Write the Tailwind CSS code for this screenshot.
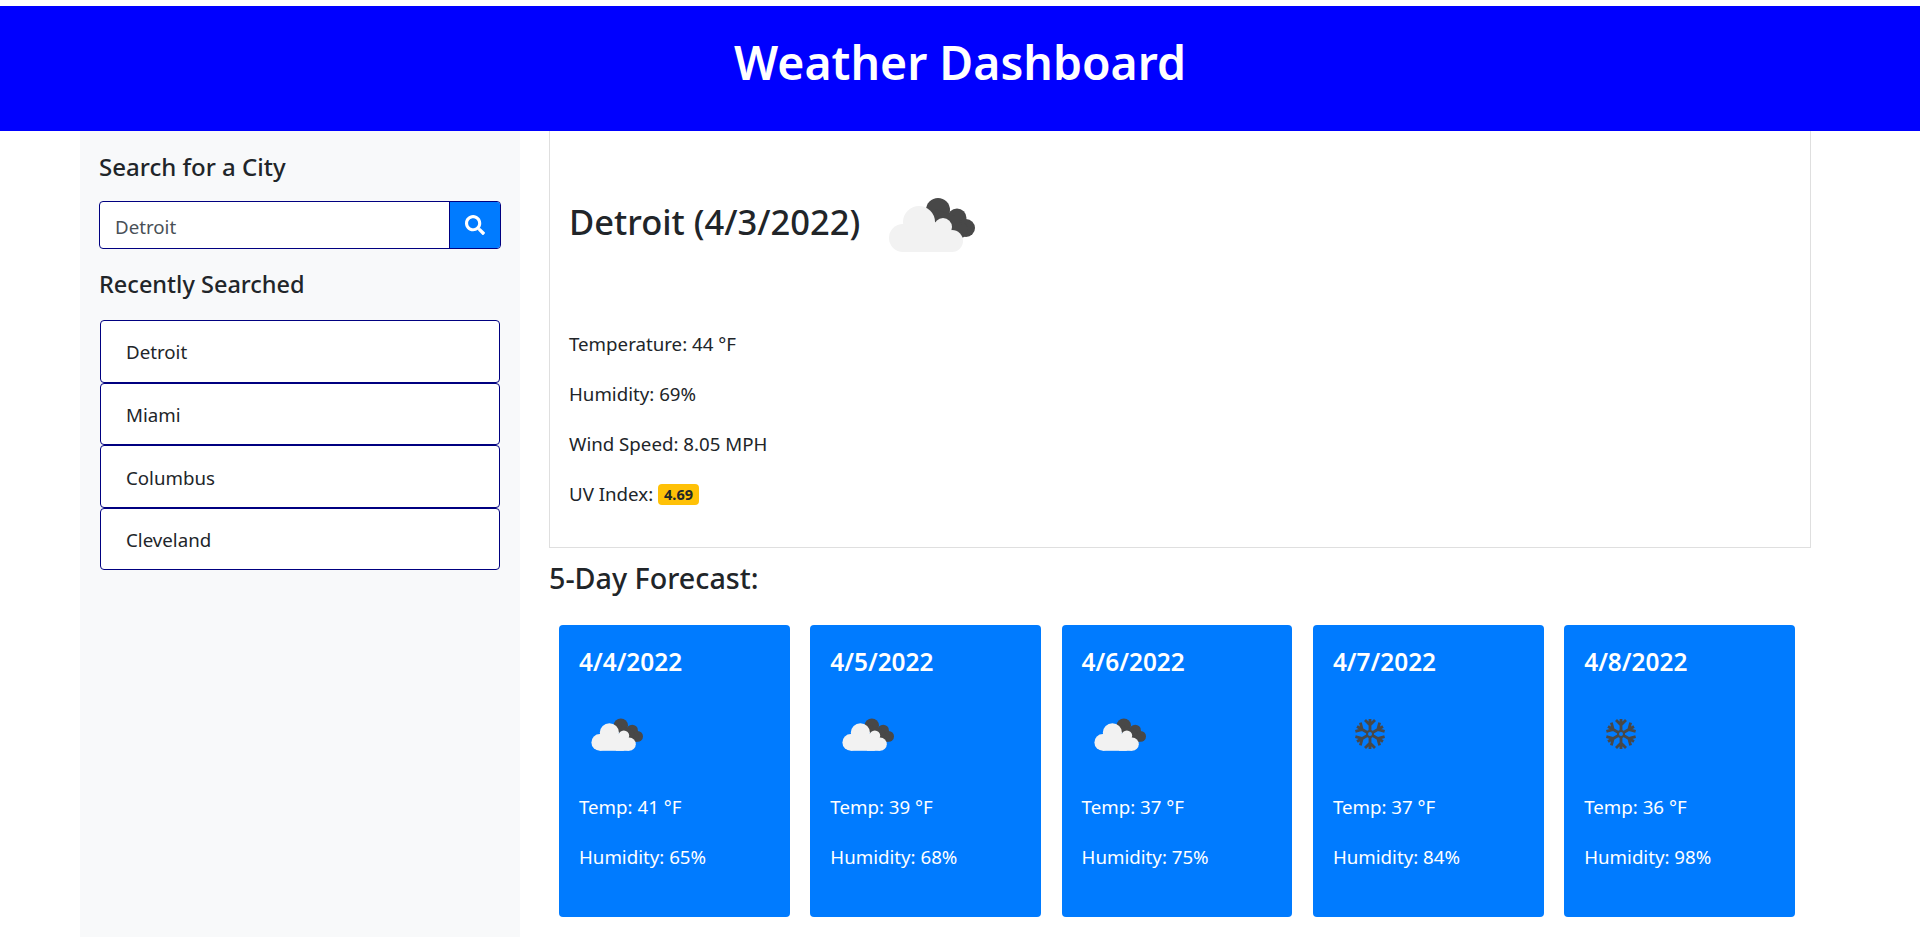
<!DOCTYPE html>
<html lang="en">
<head>
<meta charset="utf-8">
<title>Weather Dashboard</title>
<script src="https://cdn.jsdelivr.net/npm/@tailwindcss/browser@4"></script>
</head>
<body class="bg-white text-[#212529] font-['Noto_Sans',sans-serif] text-[18.7px] leading-[27px] h-[937px] overflow-hidden pt-[6px]">
<svg class="hidden">
<defs>
<symbol id="clouds" viewBox="0 0 100 100">
<g fill="#484848"><circle cx="58" cy="36" r="12"/><circle cx="77" cy="44" r="9.500"/><circle cx="86" cy="54" r="9"/><circle cx="80" cy="56" r="8"/><polygon points="55,35 75,42 85,55 78,64 60,55 50,40"/></g>
<g fill="#f2f2f2"><circle cx="23" cy="64" r="14"/><circle cx="39" cy="48" r="16"/><circle cx="63" cy="53" r="9"/><circle cx="72" cy="67" r="11"/><rect x="23" y="50" width="40" height="28"/><rect x="50" y="60" width="22" height="18"/></g>
</symbol>
<symbol id="snow" viewBox="0 0 60 60">
<g fill="none" stroke="#484848" stroke-width="2.800" stroke-linecap="butt" stroke-linejoin="miter">
<path d="M30 27V15M25 16 30 21 35 16"/>
<g transform="rotate(60 30 30)"><path d="M30 27V15M25 16 30 21 35 16"/></g>
<g transform="rotate(120 30 30)"><path d="M30 27V15M25 16 30 21 35 16"/></g>
<g transform="rotate(180 30 30)"><path d="M30 27V15M25 16 30 21 35 16"/></g>
<g transform="rotate(240 30 30)"><path d="M30 27V15M25 16 30 21 35 16"/></g>
<g transform="rotate(300 30 30)"><path d="M30 27V15M25 16 30 21 35 16"/></g>
<circle cx="30" cy="30" r="3" stroke-width="2"/>
</g>
</symbol>
</defs>
</svg>
<header class="h-[125px] bg-[#0000ff] flex items-center justify-center pb-[14px]">
<h1 class="text-white text-[46.400px] leading-[58px] font-semibold">Weather Dashboard</h1>
</header>
<div class="flex pl-[80px]">
<aside class="w-[440px] h-[806px] bg-[#f8f9fa] px-[19px] pt-[21px] shrink-0">
<h2 class="text-[24px] leading-[29px] font-medium mb-[20px]">Search for a City</h2>
<div class="flex h-[48px] w-[402px] border border-[#000080] rounded-[4px] overflow-hidden bg-white">
<div class="flex-1 flex items-center pl-[15px] pt-[2px] text-[#495057]">Detroit</div>
<button class="w-[51px] bg-[#007bff] border-l border-[#000080] flex items-center justify-center">
<svg class="w-[20px] h-[20px]" viewBox="0 0 512 512" fill="#fff"><path d="M505 442.700L405.300 343c-4.500-4.500-10.600-7-17-7H372c27.600-35.300 44-79.700 44-128C416 93.100 322.900 0 208 0S0 93.100 0 208s93.100 208 208 208c48.300 0 92.700-16.400 128-44v16.300c0 6.400 2.500 12.500 7 17l99.700 99.700c9.400 9.400 24.600 9.400 33.900 0l28.300-28.300c9.400-9.400 9.400-24.600.1-34zM208 336c-70.700 0-128-57.200-128-128 0-70.700 57.200-128 128-128 70.700 0 128 57.200 128 128 0 70.700-57.200 128-128 128z"/></svg>
</button>
</div>
<h2 class="text-[23.500px] leading-[29px] font-medium mt-[21px] mb-[21px]">Recently Searched</h2>
<ul class="w-[400px] ml-px">
<li class="h-[63px] flex items-center pl-[25px] bg-white border border-[#000080] rounded-[4px]">Detroit</li>
<li class="h-[62px] flex items-center pl-[25px] pt-px bg-white border border-[#000080] rounded-[4px]">Miami</li>
<li class="h-[63px] flex items-center pl-[25px] pt-px bg-white border border-[#000080] rounded-[4px]">Columbus</li>
<li class="h-[62px] flex items-center pl-[25px] pt-px bg-white border border-[#000080] rounded-[4px]">Cleveland</li>
</ul>
</aside>
<main class="ml-[29px] w-[1262px]">
<section class="h-[417px] border border-t-0 border-[#dfdfdf] pl-[19px] pr-[20px]">
<div class="h-[180px] flex items-center mb-[19px]">
<h2 class="text-[34.500px] leading-[43px] font-medium w-[311px]">Detroit (4/3/2022)</h2>
<svg class="w-[100px] h-[100px] mt-[6px]"><use href="#clouds"/></svg>
</div>
<div class="flex flex-col gap-[23px]">
<p>Temperature: 44 °F</p>
<p>Humidity: 69%</p>
<p>Wind Speed: 8.05 MPH</p>
<p>UV Index: <span class="inline-block align-[1px] bg-[#ffc107] rounded-[4px] text-[14.500px] leading-[21px] px-[6px] font-bold">4.69</span></p>
</div>
</section>
<h2 class="text-[28.700px] leading-[34px] font-medium mt-[13px] mb-[30px]">5-Day Forecast:</h2>
<div class="grid grid-cols-5 gap-[20.500px] ml-[10px] w-[1236px]">
<article class="h-[292px] bg-[#007bff] rounded-[4px] text-white pl-[20px] pt-[19px]">
<h3 class="text-[24.400px] leading-[36px] font-semibold">4/4/2022</h3>
<svg class="w-[60px] h-[60px] ml-[7px] mt-[24px] mb-[29px]"><use href="#clouds"/></svg>
<p class="mb-[23px]">Temp: 41 °F</p>
<p>Humidity: 65%</p>
</article>
<article class="h-[292px] bg-[#007bff] rounded-[4px] text-white pl-[20px] pt-[19px]">
<h3 class="text-[24.400px] leading-[36px] font-semibold">4/5/2022</h3>
<svg class="w-[60px] h-[60px] ml-[7px] mt-[24px] mb-[29px]"><use href="#clouds"/></svg>
<p class="mb-[23px]">Temp: 39 °F</p>
<p>Humidity: 68%</p>
</article>
<article class="h-[292px] bg-[#007bff] rounded-[4px] text-white pl-[20px] pt-[19px]">
<h3 class="text-[24.400px] leading-[36px] font-semibold">4/6/2022</h3>
<svg class="w-[60px] h-[60px] ml-[7px] mt-[24px] mb-[29px]"><use href="#clouds"/></svg>
<p class="mb-[23px]">Temp: 37 °F</p>
<p>Humidity: 75%</p>
</article>
<article class="h-[292px] bg-[#007bff] rounded-[4px] text-white pl-[20px] pt-[19px]">
<h3 class="text-[24.400px] leading-[36px] font-semibold">4/7/2022</h3>
<svg class="w-[60px] h-[60px] ml-[7px] mt-[24px] mb-[29px]"><use href="#snow"/></svg>
<p class="mb-[23px]">Temp: 37 °F</p>
<p>Humidity: 84%</p>
</article>
<article class="h-[292px] bg-[#007bff] rounded-[4px] text-white pl-[20px] pt-[19px]">
<h3 class="text-[24.400px] leading-[36px] font-semibold">4/8/2022</h3>
<svg class="w-[60px] h-[60px] ml-[7px] mt-[24px] mb-[29px]"><use href="#snow"/></svg>
<p class="mb-[23px]">Temp: 36 °F</p>
<p>Humidity: 98%</p>
</article>
</div>
</main>
</div>
</body>
</html>
